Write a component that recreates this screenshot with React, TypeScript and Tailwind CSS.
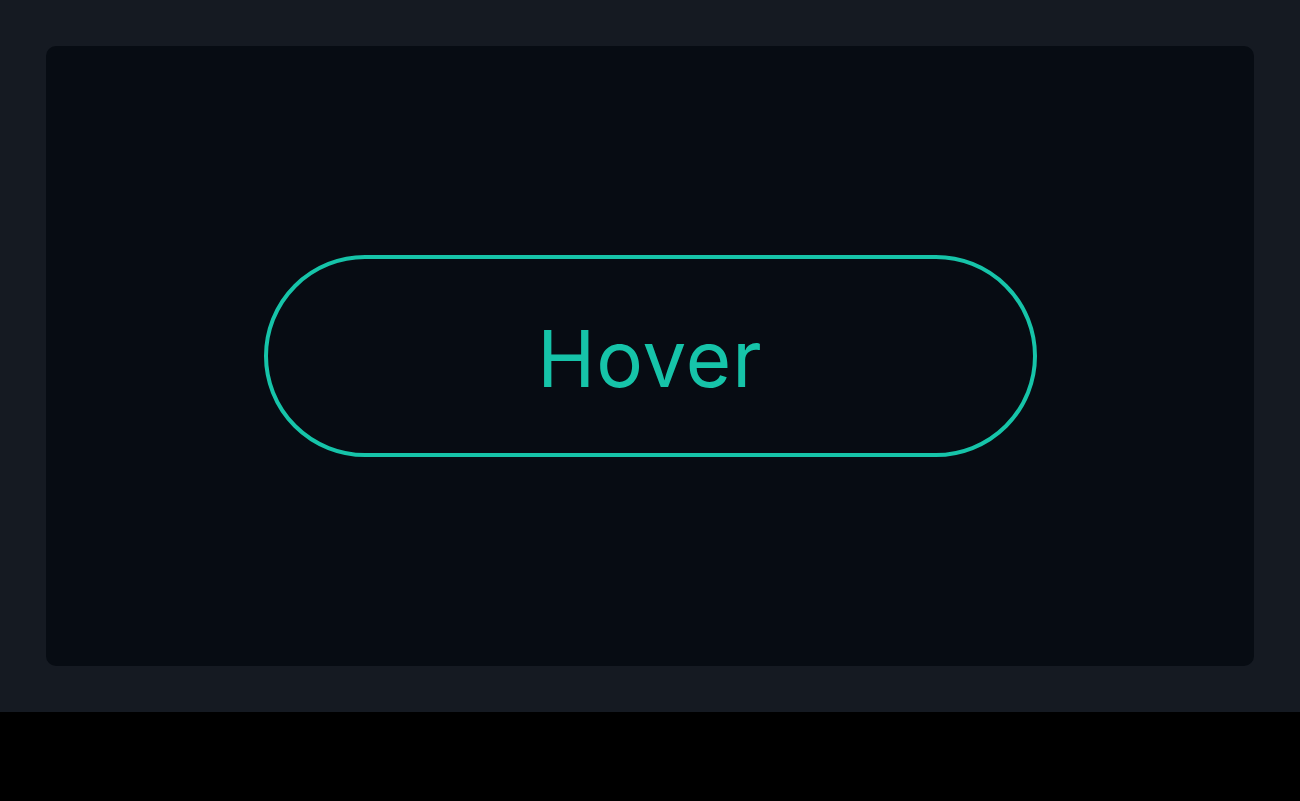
export default function App() {
  return (
    <div className="w-[1300px] h-[801px] flex flex-col bg-[#151a22]">
      {/* preview stage */}
      <div className="h-[712px] p-[46px]">
        <div className="h-full rounded-[10px] bg-[#070c13] flex items-center justify-center">
          <button className="w-[773px] h-[202px] pt-[6px] rounded-full border-4 border-[#16c4a9] text-[#16c4a9] text-[78px] leading-none font-['Inter',sans-serif] font-normal tracking-[1px] hover:bg-[#16c4a9]/10 transition-colors">
            Hover
          </button>
        </div>
      </div>
      <div className="flex-1 bg-black" />
    </div>
  );
}
